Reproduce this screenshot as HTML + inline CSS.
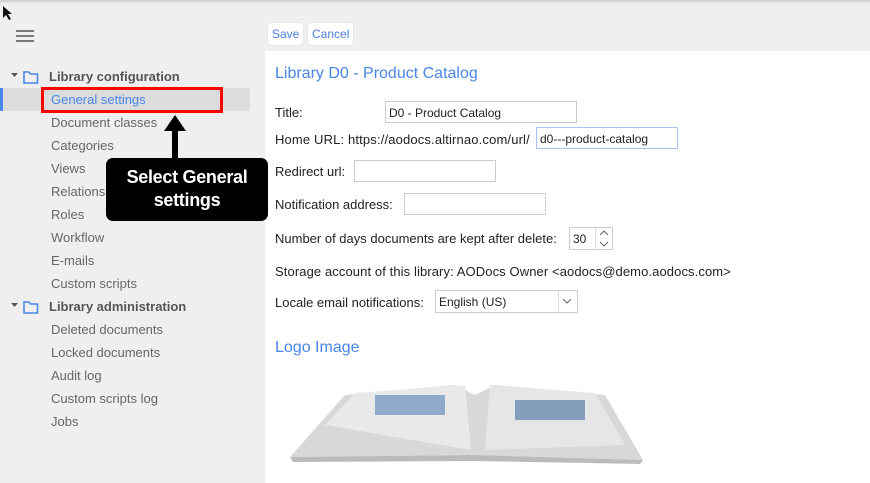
<!DOCTYPE html>
<html><head><style>
body{margin:0;width:870px;height:483px;background:#efefef;font-family:"Liberation Sans",sans-serif;position:relative;overflow:hidden;font-size:13px;color:#222}
.a{position:absolute}
.nav{color:#666;font-size:13px;left:51px}
.hd{font-weight:bold;color:#555;font-size:13px;left:49px}
.btn{background:#fff;border-radius:3px;color:#4a7fe0;font-size:12px;padding:4px 4px;box-shadow:0 0 1px #bbb}
.in{background:#fff;border:1px solid #ccc;height:22px;box-sizing:border-box;font-size:12px;padding:4px 3px}
.lbl{left:275px;font-size:13px;color:#222}
.blue{color:#4a86e8;font-size:16px;left:275px}
</style></head><body>
<div class="a" style="left:0;top:0;width:870px;height:4px;background:linear-gradient(#ccc,#efefef)"></div>
<svg class="a" style="left:2px;top:5px" width="12" height="16"><path d="M1 1 L1 13 L4 10 L7 15 L9 14 L6 9 L10 9 Z" fill="#111"/></svg>
<div class="a" style="left:16px;top:30px;width:18px;height:2px;background:#777;box-shadow:0 5px 0 #777,0 10px 0 #777"></div>
<div class="a btn" style="left:268px;top:23px">Save</div>
<div class="a btn" style="left:308px;top:23px">Cancel</div>
<div class="a" style="left:265px;top:51px;width:605px;height:432px;background:#fff"></div>
<svg class="a" style="left:10px;top:70px" width="30" height="14"><path d="M1 3 L8 3 L4.5 7 Z" fill="#555"/><path d="M14 2 h5 l1.5 2 h7 v9 h-13.5 z" fill="none" stroke="#4a86e8" stroke-width="1.6"/></svg>
<div class="a hd" style="top:69px">Library configuration</div>
<div class="a" style="left:0;top:88px;width:250px;height:23px;background:#dcdcdc"></div>
<div class="a" style="left:0;top:88px;width:3px;height:23px;background:#4a86e8"></div>
<div class="a nav" style="top:92px;color:#4a86e8">General settings</div>
<div class="a" style="left:41px;top:87px;width:176px;height:20px;border:3px solid #f00"></div>
<div class="a nav" style="top:115px">Document classes</div>
<div class="a nav" style="top:138px">Categories</div>
<div class="a nav" style="top:161px">Views</div>
<div class="a nav" style="top:184px">Relations</div>
<div class="a nav" style="top:207px">Roles</div>
<div class="a nav" style="top:230px">Workflow</div>
<div class="a nav" style="top:253px">E-mails</div>
<div class="a nav" style="top:276px">Custom scripts</div>
<svg class="a" style="left:10px;top:300px" width="30" height="14"><path d="M1 3 L8 3 L4.5 7 Z" fill="#555"/><path d="M14 2 h5 l1.5 2 h7 v9 h-13.5 z" fill="none" stroke="#4a86e8" stroke-width="1.6"/></svg>
<div class="a hd" style="top:299px">Library administration</div>
<div class="a nav" style="top:322px">Deleted documents</div>
<div class="a nav" style="top:345px">Locked documents</div>
<div class="a nav" style="top:368px">Audit log</div>
<div class="a nav" style="top:391px">Custom scripts log</div>
<div class="a nav" style="top:414px">Jobs</div>
<svg class="a" style="left:160px;top:113px" width="30" height="50"><path d="M15 2 L26 18 L18 18 L18 50 L12 50 L12 18 L4 18 Z" fill="#000"/></svg>
<div class="a" style="left:106px;top:158px;width:162px;height:63px;background:#000;border-radius:7px;color:#fff;font-weight:bold;font-size:18px;text-align:center;line-height:23px;padding-top:8px;box-sizing:border-box;letter-spacing:-0.3px">Select General<br>settings</div>
<div class="a blue" style="top:65px">Library D0 - Product Catalog</div>
<div class="a lbl" style="top:105px">Title:</div>
<div class="a in" style="left:385px;top:101px;width:192px">D0 - Product Catalog</div>
<div class="a lbl" style="top:132px;letter-spacing:0.15px">Home URL: https://aodocs.altirnao.com/url/</div>
<div class="a in" style="left:536px;top:127px;width:142px;border-color:#a9c4ec">d0---product-catalog</div>
<div class="a lbl" style="top:164px">Redirect url:</div>
<div class="a in" style="left:354px;top:160px;width:142px"></div>
<div class="a lbl" style="top:197px">Notification address:</div>
<div class="a in" style="left:404px;top:193px;width:142px"></div>
<div class="a lbl" style="top:231px">Number of days documents are kept after delete:</div>
<div class="a in" style="left:569px;top:227px;width:44px;height:23px">30</div>
<div class="a" style="left:595px;top:228px;width:1px;height:21px;background:#ddd"></div>
<svg class="a" style="left:598px;top:229px" width="12" height="20"><path d="M2 6 L6 2 L10 6 M2 13 L6 17 L10 13" fill="none" stroke="#666" stroke-width="1"/></svg>
<div class="a lbl" style="top:264px;letter-spacing:0.1px">Storage account of this library: AODocs Owner &lt;aodocs@demo.aodocs.com&gt;</div>
<div class="a lbl" style="top:295px">Locale email notifications:</div>
<div class="a in" style="left:435px;top:290px;width:143px;height:23px">English (US)</div>
<div class="a" style="left:558px;top:291px;width:1px;height:21px;background:#ddd"></div>
<svg class="a" style="left:562px;top:297px" width="10" height="8"><path d="M1 2 L5 6 L9 2" fill="none" stroke="#666"/></svg>
<div class="a blue" style="top:339px">Logo Image</div>
<svg class="a" style="left:285px;top:365px" width="365" height="100">
<path d="M5 92 L60 30 L170 20 L190 30 L210 20 L320 30 L358 95 L190 90 Z" fill="#d8d8d8"/>
<path d="M40 60 L70 28 L180 20 L186 85 Z" fill="#e9e9e9"/>
<path d="M200 85 L205 20 L310 28 L340 80 Z" fill="#e6e6e6"/>
<rect x="90" y="30" width="70" height="20" fill="#6a8fbf" opacity=".7"/>
<rect x="230" y="35" width="70" height="20" fill="#5a7fa8" opacity=".7"/>
<path d="M5 92 L190 90 L358 95 L355 99 L190 96 L8 97 Z" fill="#bbb"/>
</svg>
</body></html>
